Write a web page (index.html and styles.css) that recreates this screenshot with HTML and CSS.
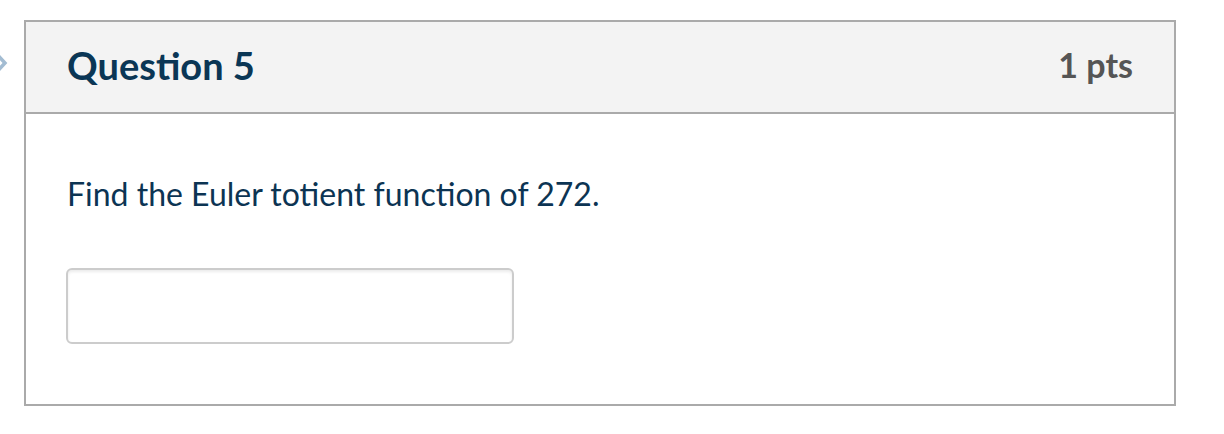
FILE: index.html
```html
<!DOCTYPE html>
<html>
<head>
<meta charset="utf-8">
<link rel="stylesheet" href="styles.css">
</head>
<body>
<div class="page">
  <svg class="flag" width="12" height="30" viewBox="0 0 12 30" aria-hidden="true">
    <path d="M-6 3 L5 15 L-6 27" fill="none" stroke="#a3bcd2" stroke-width="3.5" stroke-linejoin="miter"/>
  </svg>
  <div class="question">
    <div class="header">
      <h2 class="title">Question 5</h2>
      <span class="pts">1 pts</span>
    </div>
    <div class="content">
      <p class="text">Find the Euler totient function of 272.</p>
      <input class="answer" type="text" aria-label="Answer">
    </div>
  </div>
</div>
</body>
</html>
```
FILE: styles.css
```css
html, body {
  margin: 0;
  padding: 0;
  background: #ffffff;
}
.page {
  position: relative;
  padding: 20px 0 0 24px;
  font-family: Lato, "Open Sans", sans-serif;
}
.flag {
  position: absolute;
  left: 0;
  top: 48px;
}
.question {
  width: 1148px;
  height: 382px;
  border: 2px solid #aaaaaa;
  display: flex;
  flex-direction: column;
}
.header {
  background: #f3f3f3;
  border-bottom: 2px solid #aaaaaa;
  display: flex;
  align-items: center;
  justify-content: space-between;
  padding: 0 41px 5px 41px;
  box-sizing: border-box;
  height: 92px;
}
.title {
  margin: 0;
  font-size: 38px;
  font-weight: 700;
  color: #0a3655;
  line-height: 1;
}
.pts {
  font-size: 34px;
  font-weight: 700;
  color: #555555;
  line-height: 1;
}
.content {
  padding: 0 41px;
}
.text {
  margin: 64px 0 0 0;
  font-size: 32px;
  line-height: 1;
  color: #0c3453;
}
.answer {
  display: block;
  margin-top: 58px;
  width: 448px;
  height: 76px;
  box-sizing: border-box;
  border: 2px solid #cccccc;
  border-radius: 6px;
  box-shadow: inset 0 2px 3px rgba(0,0,0,0.08);
  background: #ffffff;
  margin-left: -1px;
}
```
